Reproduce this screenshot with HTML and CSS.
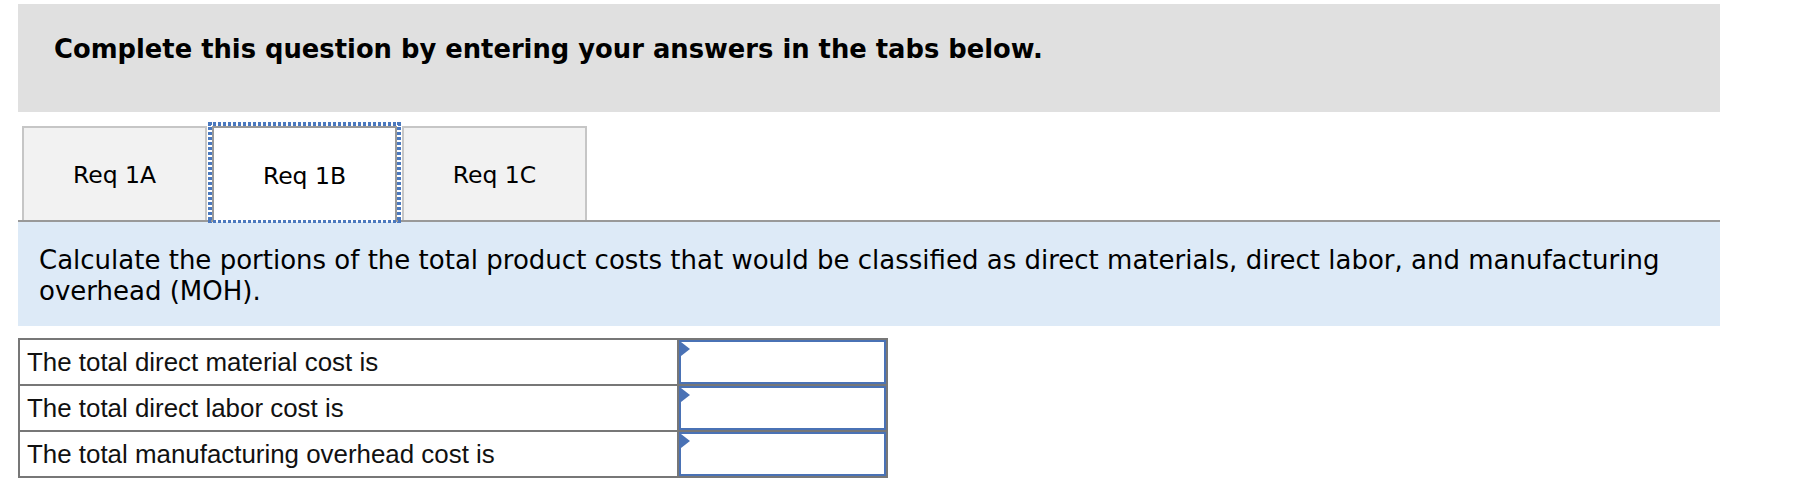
FILE: index.html
```html
<!DOCTYPE html>
<html lang="en">
<head>
<meta charset="utf-8">
<title>Complete this question</title>
<link rel="stylesheet" href="styles.css">
</head>
<body>
<div class="page">
  <div class="banner">
    <h1 class="banner-title">Complete this question by entering your answers in the tabs below.</h1>
  </div>

  <div class="tabs">
    <div class="tab">Req 1A</div>
    <div class="tab tab-active">Req 1B</div>
    <div class="tab">Req 1C</div>
  </div>

  <div class="prompt">
    <p class="prompt-text">Calculate the portions of the total product costs that would be classified as direct materials, direct labor, and manufacturing overhead (MOH).</p>
  </div>

  <div class="answers">
    <div class="label-cell">The total direct material cost is</div>
    <div class="input-cell"><span class="flag"></span></div>
    <div class="label-cell">The total direct labor cost is</div>
    <div class="input-cell"><span class="flag"></span></div>
    <div class="label-cell">The total manufacturing overhead cost is</div>
    <div class="input-cell"><span class="flag"></span></div>
  </div>
</div>
</body>
</html>
```

FILE: styles.css
```css
html, body {
  margin: 0;
  padding: 0;
  background: #ffffff;
}

.page {
  padding: 4px 0 0 18px;
  width: 1702px;
  font-family: "DejaVu Sans", Verdana, sans-serif;
  color: #000;
}

.banner {
  background: #e0e0e0;
  height: 108px;
  box-sizing: border-box;
  padding: 30px 36px 0 36px;
}

.banner-title {
  margin: 0;
  font-size: 25.8px;
  font-weight: bold;
  line-height: 30px;
}

.tabs {
  display: flex;
  gap: 5px;
  margin-top: 14px;
  padding-left: 4px;
  border-bottom: 2px solid #999999;
  height: 94px;
}

.tab {
  width: 185px;
  height: 94px;
  box-sizing: border-box;
  border: 2px solid #c6c6c6;
  border-bottom: none;
  background: #f2f2f2;
  font-size: 23.5px;
  display: flex;
  align-items: center;
  justify-content: center;
  padding-top: 2px;
}

.tab-active {
  position: relative;
  background: #ffffff;
  border-color: #999999;
  height: 96px;
}

.tab-active::after {
  content: "";
  position: absolute;
  left: -6px;
  right: -6px;
  top: -6px;
  bottom: -1px;
  background:
    repeating-linear-gradient(90deg, #4a78be 0 3px, transparent 3px 5px) top left / 100% 4px no-repeat,
    repeating-linear-gradient(90deg, #4a78be 0 3px, transparent 3px 5px) bottom left / 100% 3px no-repeat,
    repeating-linear-gradient(180deg, #4a78be 0 3px, transparent 3px 5px) top left / 4px 100% no-repeat,
    repeating-linear-gradient(180deg, #4a78be 0 3px, transparent 3px 5px) top right / 4px 100% no-repeat;
  pointer-events: none;
}

.prompt {
  background: #ddeaf7;
  height: 104px;
  box-sizing: border-box;
  padding: 23px 21px 0 21px;
}

.prompt-text {
  margin: 0;
  font-size: 26px;
  line-height: 31px;
}

.answers {
  margin-top: 12px;
  display: grid;
  grid-template-columns: 657px 207px;
  grid-auto-rows: 44px;
  gap: 2px;
  width: max-content;
  background: #777777;
  border: 2px solid #777777;
}

.label-cell {
  background: #ffffff;
  font-family: "Liberation Sans", Arial, sans-serif;
  font-size: 25.9px;
  color: #111;
  display: flex;
  align-items: center;
  padding-left: 7px;
  padding-top: 0;
  box-sizing: border-box;
}

.input-cell {
  position: relative;
  background: #ffffff;
  border: 2px solid #4a72b5;
  box-sizing: border-box;
}

.flag {
  position: absolute;
  left: 0;
  top: 0;
  width: 0;
  height: 0;
  border-left: 9px solid #4a72b5;
  border-top: 7px solid transparent;
  border-bottom: 7px solid transparent;
}
```
